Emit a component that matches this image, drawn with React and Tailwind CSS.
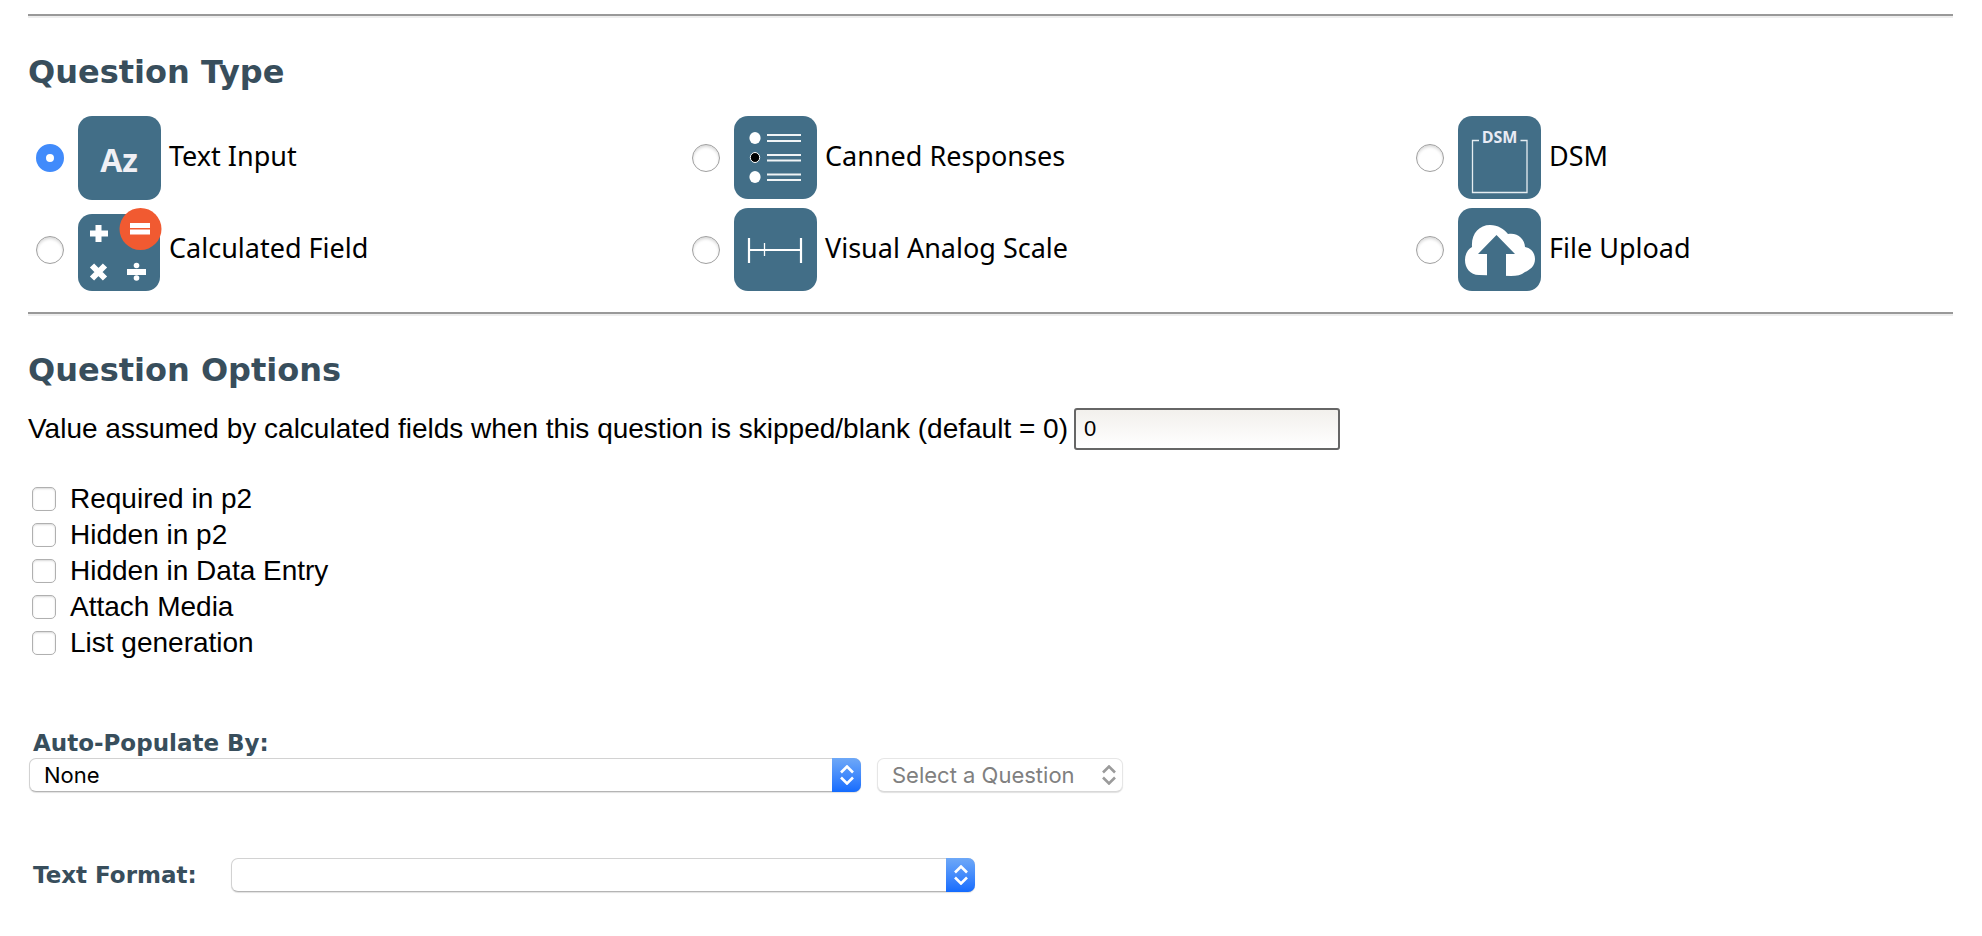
import React, { useState } from 'react'

const Tile = ({ children }) => (
    <svg viewBox="0 0 84 84" className="w-[84px] h-[84px] shrink-0" aria-hidden="true">
        {children}
    </svg>
)

const TextInputIcon = () => (
    <Tile>
        <rect width="83" height="84" rx="14" fill="#426e87" />
        <text x="41" y="56" textAnchor="middle" fontFamily="Open Sans, sans-serif" fontWeight="700" fontSize="32" fill="#f0f0f5">Az</text>
    </Tile>
)

const CalculatedIcon = () => (
    <Tile>
        <rect y="6" width="82" height="77" rx="14" fill="#426e87" />
        <circle cx="62.500" cy="21" r="21" fill="#f15a31" />
        <path d="M52 17.500h20M52 24h20" stroke="#fff" strokeWidth="5" />
        <path d="M12 25.500h18M20.500 17v17" stroke="#fff" strokeWidth="6" />
        <path d="M14 57.500l13 13M27 57.500l-13 13" stroke="#fff" strokeWidth="6" />
        <path d="M49 64h19" stroke="#fff" strokeWidth="6" />
        <circle cx="58.500" cy="57.500" r="2.800" fill="#fff" />
        <circle cx="58.500" cy="70" r="2.800" fill="#fff" />
    </Tile>
)

const CannedIcon = () => (
    <Tile>
        <rect width="83" height="83" rx="14" fill="#426e87" />
        <ellipse cx="21" cy="22" rx="5.600" ry="6" fill="#fff" />
        <ellipse cx="21" cy="41.500" rx="4.700" ry="5" fill="#000" stroke="#fff" strokeWidth="1" />
        <ellipse cx="21" cy="61" rx="5.600" ry="6" fill="#fff" />
        <path d="M33 19h34M33 25h34M33 39h34M33 44.500h34M33 58.500h34M33 64h34" stroke="#f0f4f6" strokeWidth="1.900" />
    </Tile>
)

const ScaleIcon = () => (
    <Tile>
        <rect width="83" height="83" rx="14" fill="#426e87" />
        <path d="M15 30v25M67 30v25M15 42h52" stroke="#fff" strokeWidth="2.200" />
        <path d="M30.500 35v13" stroke="#fff" strokeWidth="1.300" />
    </Tile>
)

const DsmIcon = () => (
    <Tile>
        <rect width="83" height="83" rx="14" fill="#426e87" />
        <path d="M21 24.500h-6.500v52h54.500v-52h-6.500" fill="none" stroke="#e6edf1" strokeWidth="1.300" />
        <text x="41.500" y="27" textAnchor="middle" fontFamily="Open Sans, sans-serif" fontWeight="700" fontSize="16" fill="#e8ebf5">DSM</text>
    </Tile>
)

const UploadIcon = () => (
    <Tile>
        <rect width="83" height="83" rx="14" fill="#426e87" />
        <path d="M21 67C12 67 7 60 7 52c0-6 3-11 7-13C13 26 21 17 32 17c8 0 14 4 18 9 9-2 17 5 17 13 6 1 10 6 10 12 0 7-5 11-10 13-4 3-8 4-14 4z" fill="#fff" />
        <path d="M38.500 27L57 46h-9v23H29V46h-9z" fill="#426e87" />
    </Tile>
)

const questionTypes = [
    { id: 'text', label: 'Text Input', Icon: TextInputIcon },
    { id: 'canned', label: 'Canned Responses', Icon: CannedIcon },
    { id: 'dsm', label: 'DSM', Icon: DsmIcon },
    { id: 'calculated', label: 'Calculated Field', Icon: CalculatedIcon },
    { id: 'scale', label: 'Visual Analog Scale', Icon: ScaleIcon },
    { id: 'upload', label: 'File Upload', Icon: UploadIcon },
]

const options = ['Required in p2', 'Hidden in p2', 'Hidden in Data Entry', 'Attach Media', 'List generation']

const Divider = () => <hr className="border-t-2 border-b-2 border-t-[#999] border-b-[#eee]" />

const Heading = ({ children }) => (
    <h2 className="mt-[34px] text-[32px] leading-10 font-bold text-[#384e5c] font-['Verdana','DejaVu_Sans',sans-serif]">{children}</h2>
)

const Arrows = () => (
    <svg viewBox="0 0 14 20" className="w-[14px] h-5" fill="none" stroke="currentColor" strokeWidth="2.600" aria-hidden="true">
        <path d="M1 7.500l6-6 6 6M1 12.500l6 6 6-6" />
    </svg>
)

const Select = ({ className, disabled, children, ...props }) => (
    <div className={`relative h-[34px] max-w-full ${className}`}>
        <select
            disabled={disabled}
            className="appearance-none block w-full h-full rounded-[7px] border border-[#d2d2d2] border-b-[#b4b4b4] bg-white pl-[14px] pr-10 text-[22px] leading-7 text-black shadow-[0_1px_1px_rgba(0,0,0,0.12)] font-['Inter',sans-serif] disabled:opacity-100 disabled:border-[#e6e6e6] disabled:border-b-[#d8d8d8] disabled:text-[#808080]"
            {...props}
        >
            {children}
        </select>
        {disabled ? (
            <span className="absolute inset-y-0 right-0 w-[29px] flex items-center justify-center text-[#9b9b9b] pointer-events-none"><Arrows /></span>
        ) : (
            <span className="absolute inset-y-0 right-0 w-[29px] flex items-center justify-center rounded-r-[7px] bg-linear-to-b from-[#6ea8f7] to-[#136bfe] text-white pointer-events-none"><Arrows /></span>
        )}
    </div>
)

const App = () => {
    const [type, setType] = useState('text')
    const [blankValue, setBlankValue] = useState('0')

    return (
        <main className="bg-white pt-[14px] pb-8 pl-7 pr-[29px] text-black font-['Liberation_Sans',sans-serif]">
            <Divider />
            <section>
                <Heading>Question Type</Heading>
                <div className="mt-5 mb-4 grid grid-cols-[656fr_724fr_545fr]">
                    {questionTypes.map(({ id, label, Icon }) => (
                        <label key={id} className="flex items-center h-[92px] pl-2">
                            <input
                                type="radio"
                                name="questionType"
                                value={id}
                                checked={type === id}
                                onChange={() => setType(id)}
                                className="appearance-none w-7 h-7 mr-[14px] shrink-0 rounded-full border border-[#a0a0a0] bg-white shadow-[inset_0_2px_3px_rgba(0,0,0,0.15)] checked:border-[10px] checked:border-[#418bfb] checked:shadow-none"
                            />
                            <Icon />
                            <span className="ml-[7px] pb-1 text-[27px] leading-9 font-['Trebuchet_MS','Noto_Sans',sans-serif]">{label}</span>
                        </label>
                    ))}
                </div>
            </section>
            <Divider />
            <section>
                <Heading>Question Options</Heading>
                <div className="mt-[18px] flex items-center gap-[6px]">
                    <label htmlFor="blankValue" className="text-[28px] leading-9">
                        Value assumed by calculated fields when this question is skipped/blank (default = 0)
                    </label>
                    <input
                        id="blankValue"
                        type="text"
                        value={blankValue}
                        onChange={(e) => setBlankValue(e.target.value)}
                        className="w-[266px] h-[42px] rounded-[3px] border-2 border-[#666] bg-linear-to-b from-[#f2f0ec] to-white px-2 text-[22px]"
                    />
                </div>
                <div className="mt-[31px] pl-1">
                    {options.map((option) => (
                        <label key={option} className="flex items-center gap-[14px] text-[28px] leading-9">
                            <input
                                type="checkbox"
                                className="appearance-none w-6 h-6 shrink-0 rounded-[5px] border border-[#b0b0b0] bg-white shadow-[inset_0_1px_2px_rgba(0,0,0,0.15)] checked:bg-[#418bfb]"
                            />
                            {option}
                        </label>
                    ))}
                </div>
                <div className="mt-[68px]">
                    <label htmlFor="autoPopulate" className="block pl-[5px] text-[23px] leading-7 font-bold text-[#384e5c] font-['Verdana','DejaVu_Sans',sans-serif]">Auto-Populate By:</label>
                    <div className="mt-px pl-px flex gap-4">
                        <Select id="autoPopulate" className="w-[832px]">
                            <option>None</option>
                        </Select>
                        <Select disabled aria-label="Question" className="w-[246px]">
                            <option>Select a Question</option>
                        </Select>
                    </div>
                </div>
                <div className="mt-[66px] flex items-center">
                    <label htmlFor="textFormat" className="w-[203px] pl-[5px] text-[23px] leading-7 font-bold text-[#384e5c] font-['Verdana','DejaVu_Sans',sans-serif]">Text Format:</label>
                    <Select id="textFormat" className="w-[744px]">
                        <option></option>
                    </Select>
                </div>
            </section>
        </main>
    )
}

export default App
